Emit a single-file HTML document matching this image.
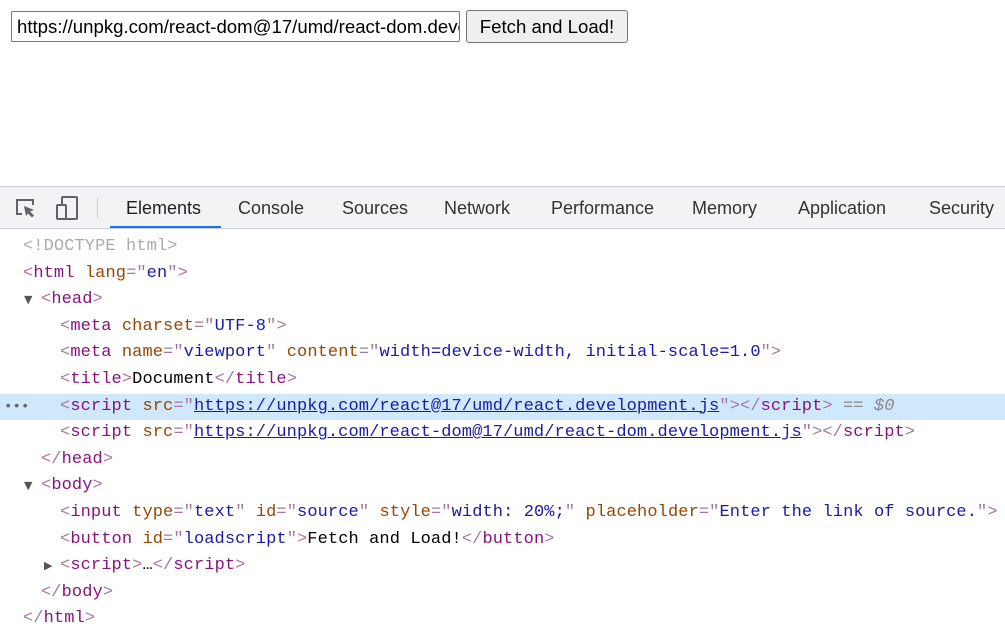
<!DOCTYPE html>
<html><head><style>
body{margin:0;width:1005px;height:624px;overflow:hidden;background:#fff;font-family:"Liberation Sans",sans-serif;position:relative}
.inp{position:absolute;left:11px;top:11px;width:449px;height:31px;box-sizing:border-box;border:1px solid #767676;border-radius:2px;font-size:18.6px;line-height:29px;padding-left:5px;overflow:hidden;white-space:nowrap;color:#000}
.btn{position:absolute;left:466px;top:10px;width:162px;height:33px;box-sizing:border-box;border:1px solid #767676;border-radius:3px;background:#efefef;font-size:18.6px;text-align:center;line-height:31px}
.bar{position:absolute;left:0;top:186px;width:1005px;height:43px;background:#f1f3f4;border-top:1px solid #cbcdd1;border-bottom:1px solid #cbcdd1;box-sizing:border-box}
.tab{position:absolute;top:11px;font-size:18px;color:#333}
.ul{position:absolute;left:110px;top:39px;width:111px;height:2px;background:#1a73e8}
.code{position:absolute;left:0;top:234px;width:1005px;font-family:"Liberation Mono",monospace;font-size:17px;letter-spacing:0.1px}
.l{height:26.6px;line-height:26.6px;white-space:pre;position:relative}
.sel{background:#cfe8fc}
.t{color:#881280}.b{color:#a5789e}.a{color:#994500}.v{color:#1a1aa6}.k{color:#1a1aa6;text-decoration:underline}.g{color:#aaa}
.tri{position:absolute;font-size:11px;color:#555;font-family:"DejaVu Sans",sans-serif}
</style></head><body>
<div class="inp">https://unpkg.com/react-dom@17/umd/react-dom.development.js</div>
<div class="btn">Fetch and Load!</div>
<div class="bar">
<svg style="position:absolute;left:14px;top:10px" width="24" height="22" viewBox="0 0 24 22"><path d="M8 17H3V3h16v5" fill="none" stroke="#5f6368" stroke-width="2"/><path d="M10 9l10 4-4 1.5 4 4-2 2-4-4L12 19z" fill="#5f6368"/></svg>
<svg style="position:absolute;left:55px;top:8px" width="26" height="26" viewBox="0 0 26 26"><rect x="7" y="2" width="15" height="22" rx="1" fill="none" stroke="#5f6368" stroke-width="2"/><rect x="2" y="10" width="9" height="14" rx="1" fill="#f1f3f4" stroke="#5f6368" stroke-width="2"/></svg>
<div style="position:absolute;left:97px;top:10px;width:1px;height:22px;background:#ccc"></div>
<span class="tab" style="left:126px;color:#202124">Elements</span>
<span class="tab" style="left:238px">Console</span>
<span class="tab" style="left:342px">Sources</span>
<span class="tab" style="left:444px">Network</span>
<span class="tab" style="left:551px">Performance</span>
<span class="tab" style="left:692px">Memory</span>
<span class="tab" style="left:798px">Application</span>
<span class="tab" style="left:929px">Security</span>
<div class="ul"></div>
</div>
<div class="code">
<div class="l" style="padding-left:23px"><span class="g">&lt;!DOCTYPE html&gt;</span></div>
<div class="l" style="padding-left:23px"><span class="b">&lt;</span><span class="t">html</span> <span class="a">lang</span><span class="b">="</span><span class="v">en</span><span class="b">"&gt;</span></div>
<div class="l" style="padding-left:41px"><span class="tri" style="left:24px">▼</span><span class="b">&lt;</span><span class="t">head</span><span class="b">&gt;</span></div>
<div class="l" style="padding-left:60px"><span class="b">&lt;</span><span class="t">meta</span> <span class="a">charset</span><span class="b">="</span><span class="v">UTF-8</span><span class="b">"&gt;</span></div>
<div class="l" style="padding-left:60px"><span class="b">&lt;</span><span class="t">meta</span> <span class="a">name</span><span class="b">="</span><span class="v">viewport</span><span class="b">"</span> <span class="a">content</span><span class="b">="</span><span class="v">width=device-width, initial-scale=1.0</span><span class="b">"&gt;</span></div>
<div class="l" style="padding-left:60px"><span class="b">&lt;</span><span class="t">title</span><span class="b">&gt;</span>Document<span class="b">&lt;/</span><span class="t">title</span><span class="b">&gt;</span></div>
<div class="l sel" style="padding-left:60px"><span style="position:absolute;left:4px;color:#666;font-size:14px">•••</span><span class="b">&lt;</span><span class="t">script</span> <span class="a">src</span><span class="b">="</span><span class="k">https://unpkg.com/react@17/umd/react.development.js</span><span class="b">"&gt;&lt;/</span><span class="t">script</span><span class="b">&gt;</span> <span class="g" style="color:#888">== <i>$0</i></span></div>
<div class="l" style="padding-left:60px"><span class="b">&lt;</span><span class="t">script</span> <span class="a">src</span><span class="b">="</span><span class="k">https://unpkg.com/react-dom@17/umd/react-dom.development.js</span><span class="b">"&gt;&lt;/</span><span class="t">script</span><span class="b">&gt;</span></div>
<div class="l" style="padding-left:41px"><span class="b">&lt;/</span><span class="t">head</span><span class="b">&gt;</span></div>
<div class="l" style="padding-left:41px"><span class="tri" style="left:24px">▼</span><span class="b">&lt;</span><span class="t">body</span><span class="b">&gt;</span></div>
<div class="l" style="padding-left:60px"><span class="b">&lt;</span><span class="t">input</span> <span class="a">type</span><span class="b">="</span><span class="v">text</span><span class="b">"</span> <span class="a">id</span><span class="b">="</span><span class="v">source</span><span class="b">"</span> <span class="a">style</span><span class="b">="</span><span class="v">width: 20%;</span><span class="b">"</span> <span class="a">placeholder</span><span class="b">="</span><span class="v">Enter the link of source.</span><span class="b">"&gt;</span></div>
<div class="l" style="padding-left:60px"><span class="b">&lt;</span><span class="t">button</span> <span class="a">id</span><span class="b">="</span><span class="v">loadscript</span><span class="b">"&gt;</span>Fetch and Load!<span class="b">&lt;/</span><span class="t">button</span><span class="b">&gt;</span></div>
<div class="l" style="padding-left:60px"><span class="tri" style="left:44px">▶</span><span class="b">&lt;</span><span class="t">script</span><span class="b">&gt;</span>…<span class="b">&lt;/</span><span class="t">script</span><span class="b">&gt;</span></div>
<div class="l" style="padding-left:41px"><span class="b">&lt;/</span><span class="t">body</span><span class="b">&gt;</span></div>
<div class="l" style="padding-left:23px"><span class="b">&lt;/</span><span class="t">html</span><span class="b">&gt;</span></div>
</div>
</body></html>
